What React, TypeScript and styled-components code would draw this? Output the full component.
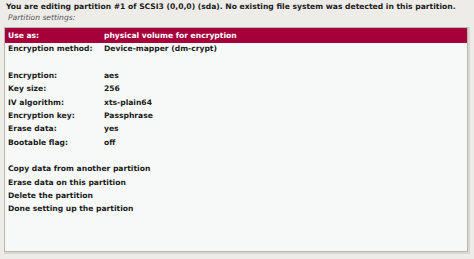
import React from "react";
import styled, { createGlobalStyle } from "styled-components";

const Global = createGlobalStyle`
  html, body { margin: 0; padding: 0; background: #edece9; }
  body { font-family: "DejaVu Sans", sans-serif; }
`;

const Page = styled.div`
  width: 474px;
  height: 259px;
  box-sizing: border-box;
  padding: 2px 6px 0 4px;
  display: flex;
  flex-direction: column;
  background: #edece9;
  color: #1b1b1b;
`;

const Title = styled.div`
  font-weight: bold;
  font-size: 7.6px;
  line-height: 10px;
  padding-left: 2px;
  white-space: nowrap;
`;

const Subtitle = styled.div`
  font-style: italic;
  font-size: 7.6px;
  line-height: 12px;
  color: #555;
  padding-left: 4px;
`;

const Frame = styled.div`
  margin-top: 3px;
  height: 225px;
  box-sizing: border-box;
  border: 1px solid #b9b7b1;
  box-shadow: 1px 1px 0 1px #d9d7d2;
  background: #f6f9f7;
  display: flex;
  flex-direction: column;
  padding-top: 1px;
`;

const Row = styled.div<{ $selected?: boolean }>`
  display: grid;
  grid-template-columns: 96px 1fr;
  height: 13.33px;
  align-items: center;
  padding-left: 3px;
  font-weight: bold;
  font-size: 7.6px;
  white-space: nowrap;
  background: ${(p) => (p.$selected ? "#a6003b" : "transparent")};
  color: ${(p) => (p.$selected ? "#ffffff" : "#1b1b1b")};
  box-shadow: ${(p) => (p.$selected ? "0 -1px 0 #a6003b, 0 1px 0 #a6003b" : "none")};
`;

const Spacer = styled.div`
  height: 13.33px;
`;

type Item = { label: string; value?: string } | null;

const items: Item[] = [
  { label: "Use as:", value: "physical volume for encryption" },
  { label: "Encryption method:", value: "Device-mapper (dm-crypt)" },
  null,
  { label: "Encryption:", value: "aes" },
  { label: "Key size:", value: "256" },
  { label: "IV algorithm:", value: "xts-plain64" },
  { label: "Encryption key:", value: "Passphrase" },
  { label: "Erase data:", value: "yes" },
  { label: "Bootable flag:", value: "off" },
  null,
  { label: "Copy data from another partition" },
  { label: "Erase data on this partition" },
  { label: "Delete the partition" },
  { label: "Done setting up the partition" },
];

export default function App() {
  return (
    <Page>
      <Global />
      <Title>
        You are editing partition #1 of SCSI3 (0,0,0) (sda). No existing file system was detected in this partition.
      </Title>
      <Subtitle>Partition settings:</Subtitle>
      <Frame>
        {items.map((it, i) =>
          it === null ? (
            <Spacer key={i} />
          ) : (
            <Row key={i} $selected={i === 0}>
              <span>{it.label}</span>
              <span>{it.value ?? ""}</span>
            </Row>
          )
        )}
      </Frame>
    </Page>
  );
}
